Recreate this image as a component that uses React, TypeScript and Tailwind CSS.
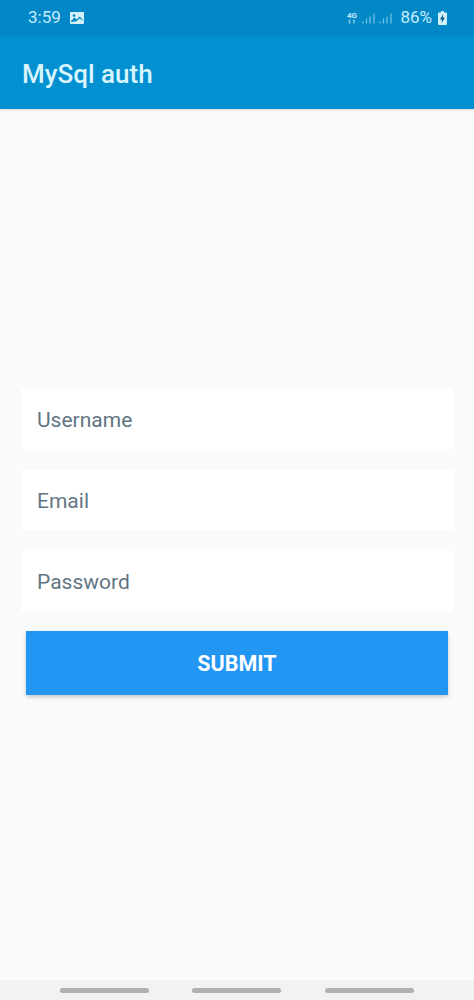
export default function App() {
  return (
    <div className="w-[474px] h-[1000px] flex flex-col bg-[#fafafa] font-['Roboto',sans-serif] overflow-hidden">
      <div className="h-[35px] shrink-0 bg-[#0288c7] flex items-center pl-[28px] pr-[27px] text-[#c5ecfb]">
        <span className="text-[17px] leading-none">3:59</span>
        <svg className="ml-[9px]" width="14" height="12" viewBox="0 0 14 12">
          <rect width="14" height="12" rx="1" fill="#d3f0fb" />
          <circle cx="4" cy="3.6" r="1.3" fill="#0288c7" />
          <path d="M1 9 L4.5 5.6 L6.8 7.6 L9.6 4.6 L13 8 L13 8.6 L9.5 6.6 L6.5 9.2 L1 10 Z" fill="#0288c7" />
        </svg>
        <div className="ml-auto flex items-center">
          <svg width="45" height="14" viewBox="0 0 45 14">
            <text x="0" y="6.5" fontSize="8" fontWeight="700" fill="#c5ecfb" fontFamily="Roboto">4G</text>
            <path d="M2.5 8.5v4M7 8.5v4" stroke="#7fc8e8" strokeWidth="1.6" />
            <path d="M16 12.5v-2M19.5 12.5v-5M23 12.5v-7M27 12.5v-10" stroke="#6fc0e2" strokeWidth="1.3" />
            <path d="M33 12.5v-2M36.5 12.5v-5M40 12.5v-7M44 12.5v-10" stroke="#6fc0e2" strokeWidth="1.3" />
          </svg>
          <span className="ml-[8px] text-[17px] leading-none">86%</span>
          <svg className="ml-[6px]" width="9" height="14" viewBox="0 0 9 14">
            <rect x="3" width="3" height="2" fill="#d3f0fb" />
            <rect y="1.5" width="9" height="12.5" rx="1" fill="#d3f0fb" />
            <path d="M5.2 3 L2 8.4 H4 L3.6 12 L7 6.4 H4.8 Z" fill="#0a5a86" />
          </svg>
        </div>
      </div>
      <div className="h-[74px] shrink-0 bg-[#0290d1] flex items-center pl-[22px] pt-[4px] shadow-[0_1px_2px_rgba(0,0,0,0.12)]">
        <span className="text-[26px] font-medium text-[#d8f4fd]">MySql auth</span>
      </div>
      <div className="flex-1 flex flex-col justify-center px-[21px] pb-[5px]">
        <div className="flex flex-col gap-[21px]">
          {["Username", "Email", "Password"].map((t) => (
            <div key={t} className="h-[60px] bg-white flex items-center px-[16px] pt-[4px] text-[21px] text-[#5f7583]">{t}</div>
          ))}
        </div>
        <button className="mt-[20px] mx-[5px] h-[64px] pt-[2px] bg-[#2196f3] text-white font-bold text-[21.5px] shadow-[0_2px_4px_rgba(0,0,0,0.2)]">SUBMIT</button>
      </div>
      <div className="h-[20px] shrink-0 bg-[#f2f2f2] flex items-center pl-[60px] gap-[43px]">
        <div className="w-[89px] h-[5px] rounded-full bg-[#b0b0b0]" />
        <div className="w-[89px] h-[5px] rounded-full bg-[#b0b0b0]" />
        <div className="w-[89px] h-[5px] rounded-full bg-[#b0b0b0] ml-[1px]" />
      </div>
    </div>
  );
}
